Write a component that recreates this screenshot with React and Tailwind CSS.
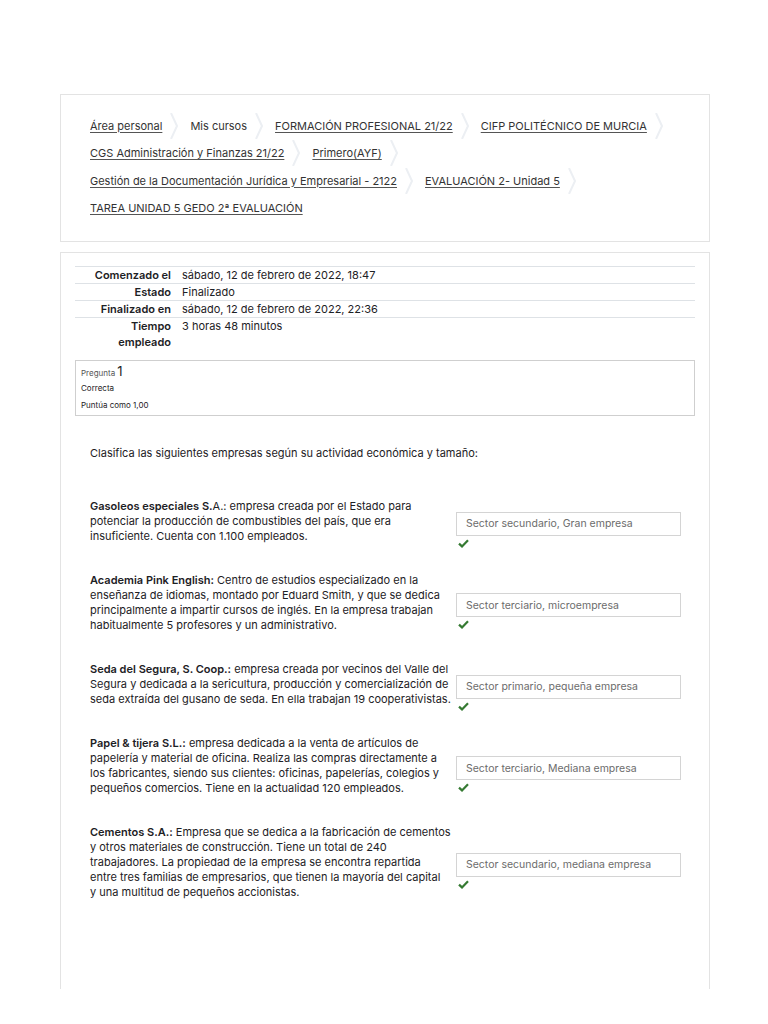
import React from 'react';

const crumbs = [
  [
    { label: 'Área personal', link: true },
    { label: 'Mis cursos', link: false },
    { label: 'FORMACIÓN PROFESIONAL 21/22', link: true },
    { label: 'CIFP POLITÉCNICO DE MURCIA', link: true },
  ],
  [
    { label: 'CGS Administración y Finanzas 21/22', link: true },
    { label: 'Primero(AYF)', link: true },
  ],
  [
    { label: 'Gestión de la Documentación Jurídica y Empresarial - 2122', link: true },
    { label: 'EVALUACIÓN 2- Unidad 5', link: true },
  ],
  [{ label: 'TAREA UNIDAD 5 GEDO 2ª EVALUACIÓN', link: true, last: true }],
];

const summary = [
  [['Comenzado el'], 'sábado, 12 de febrero de 2022, 18:47'],
  [['Estado'], 'Finalizado'],
  [['Finalizado en'], 'sábado, 12 de febrero de 2022, 22:36'],
  [['Tiempo', 'empleado'], '3 horas 48 minutos'],
];

// lines are broken where the reference breaks them
const items = [
  {
    name: 'Gasoleos especiales S.',
    lines: [
      'A.: empresa creada por el Estado para',
      'potenciar la producción de combustibles del país, que era',
      'insuficiente. Cuenta con 1.100 empleados.',
    ],
    answer: 'Sector secundario, Gran empresa',
  },
  {
    name: 'Academia Pink English:',
    lines: [
      ' Centro de estudios especializado en la',
      'enseñanza de idiomas, montado por Eduard Smith, y que se dedica',
      'principalmente a impartir cursos de inglés. En la empresa trabajan',
      'habitualmente 5 profesores y un administrativo.',
    ],
    answer: 'Sector terciario, microempresa',
  },
  {
    name: 'Seda del Segura, S. Coop.:',
    lines: [
      ' empresa creada por vecinos del Valle del',
      'Segura y dedicada a la sericultura, producción y comercialización de',
      'seda extraída del gusano de seda. En ella trabajan 19 cooperativistas.',
    ],
    answer: 'Sector primario, pequeña empresa',
  },
  {
    name: 'Papel & tijera S.L.:',
    lines: [
      ' empresa dedicada a la venta de artículos de',
      'papelería y material de oficina. Realiza las compras directamente a',
      'los fabricantes, siendo sus clientes: oficinas, papelerías, colegios y',
      'pequeños comercios. Tiene en la actualidad 120 empleados.',
    ],
    answer: 'Sector terciario, Mediana empresa',
  },
  {
    name: 'Cementos S.A.:',
    lines: [
      ' Empresa que se dedica a la fabricación de cementos',
      'y otros materiales de construcción. Tiene un total de 240',
      'trabajadores. La propiedad de la empresa se encontra repartida',
      'entre tres familias de empresarios, que tienen la mayoría del capital',
      'y una multitud de pequeños accionistas.',
    ],
    answer: 'Sector secundario, mediana empresa',
  },
];

function Separator() {
  return (
    <svg width="8" height="26" viewBox="0 0 8 26" className="ml-[8px] mr-[12px] shrink-0">
      <path d="M1 0 L7 13 L1 26" fill="none" stroke="#eceff3" strokeWidth="2" />
    </svg>
  );
}

function CheckIcon() {
  return (
    <svg width="11" height="9" viewBox="0 0 11 9" className="block">
      <path d="M1 4.6 L4 7.4 L10 1.2" fill="none" stroke="#357a32" strokeWidth="2.2" />
    </svg>
  );
}

export default function App() {
  return (
    <div
      className="min-h-[1024px] bg-white text-[#1d2125] pt-[94px]"
      style={{ fontFamily: 'Inter, "Noto Sans", sans-serif' }}
    >
      {/* breadcrumb card */}
      <div className="ml-[60px] w-[650px] h-[148px] border border-[#e3e3e3] pt-[17px] pl-[29px] pr-4">
        {crumbs.map((row, i) => (
          <div key={i} className="flex items-center h-[27.5px] text-[11px] text-[#333] whitespace-nowrap">
            {row.map((c, j) => (
              <React.Fragment key={j}>
                <span className={c.link ? 'underline underline-offset-2 decoration-[#555]' : ''}>{c.label}</span>
                {!c.last && <Separator />}
              </React.Fragment>
            ))}
          </div>
        ))}
      </div>

      {/* attempt card */}
      <div className="ml-[60px] mt-[10px] w-[650px] h-[737px] border-x border-t border-[#e3e3e3] px-[14px] pt-[13px]">
        <table className="w-[620px] text-[11px] leading-[16px] border-collapse">
          <tbody>
            {summary.map(([k, v]) => (
              <tr key={k[0]} className="border-t border-[#dee2e6] align-top">
                <th className="w-[104px] text-right font-semibold pr-[8px] whitespace-nowrap">
                  {k.map((part) => (
                    <div key={part}>{part}</div>
                  ))}
                </th>
                <td className="pl-[3px] font-normal">{v}</td>
              </tr>
            ))}
          </tbody>
        </table>

        <div className="mt-[10px] w-[620px] h-[56px] border border-[#cfcfcf] pl-[5px] pt-[3px] text-[8px] leading-[10px]">
          <div className="flex items-baseline gap-[2px] text-[#555]">
            <span>Pregunta</span>
            <span className="text-[13px] leading-[14px] text-[#1d2125]">1</span>
          </div>
          <div className="mt-[5px]">Correcta</div>
          <div className="mt-[7px]">Puntúa como 1,00</div>
        </div>

        <div className="pl-[15px] mt-[30px] text-[11px] leading-[15px]">
          <p>Clasifica las siguientes empresas según su actividad económica y tamaño:</p>

          <div className="mt-[38px] flex flex-col gap-[11px]">
            {items.map((it) => (
              <div key={it.name} className="flex items-center">
                <div className="w-[362px] pb-[18px] shrink-0 whitespace-pre">
                  {it.lines.map((line, i) => (
                    <div key={i}>
                      {i === 0 && <span className="font-semibold">{it.name}</span>}
                      {line}
                    </div>
                  ))}
                </div>
                <div className="ml-[4px]">
                  <div className="w-[225px] h-[24px] border border-[#d4d4d4] flex items-center pl-[9px] text-[10.5px] text-[#6c6c6c]">
                    {it.answer}
                  </div>
                  <div className="h-[14px] pt-[3px] pl-[2px]">
                    <CheckIcon />
                  </div>
                </div>
              </div>
            ))}
          </div>
        </div>
      </div>
    </div>
  );
}
